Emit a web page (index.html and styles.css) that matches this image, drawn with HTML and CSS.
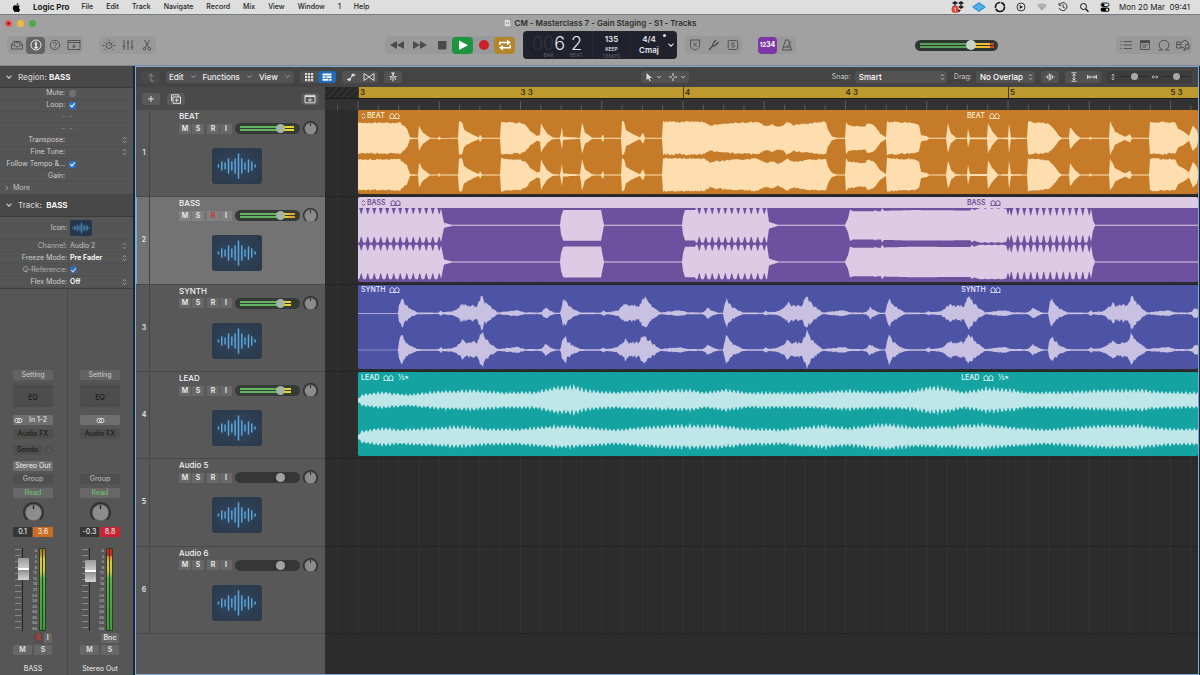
FILE: index.html
```html
<!DOCTYPE html>
<html lang="en">
<head>
<meta charset="utf-8">
<title>CM - Masterclass 7 - Gain Staging - S1 - Tracks</title>
<link rel="stylesheet" href="styles.css">
</head>
<body>
<svg class="defs" aria-hidden="true">
  <symbol id="chev" viewBox="0 0 8 8"><path d="M1.500 2.700 4 5.200l2.500-2.500" fill="none" stroke="currentColor" stroke-width="1.100"/></symbol>
  <symbol id="updown" viewBox="0 0 8 8"><path d="M2 3l2-2 2 2M2 5l2 2 2-2" fill="none" stroke="currentColor" stroke-width="1"/></symbol>
  <symbol id="loop" viewBox="0 0 22 12"><path d="M1 11h4C0 8.500 1 1.500 6 1.500s6 7 1 9.500h8C10 8.500 11 1.500 16 1.500s6 7 1 9.500h4" fill="none" stroke="currentColor" stroke-width="1.800"/></symbol>
  <symbol id="rings" viewBox="0 0 12 8"><g fill="none" stroke="currentColor" stroke-width="1.100"><circle cx="4.300" cy="4" r="3"/><circle cx="7.700" cy="4" r="3"/></g></symbol>
  <symbol id="wave" viewBox="0 0 50 36"><path d="M6.500 17v2M9.800 14v8M13.100 15v6M16.500 11v14M19.800 14v8M23.100 11v14M26.500 6v24M29.800 11v14M33.100 15v6M36.500 12v12M39.800 14v8M43.100 17v2" fill="none" stroke="#5ba6dc" stroke-width="1.500" stroke-linecap="round"/></symbol>
  <symbol id="knob" viewBox="0 0 20 20"><path d="M4 17a9.200 9.200 0 1 1 12 0" fill="none" stroke="#303030" stroke-width="1.600"/><circle cx="10" cy="10.300" r="7.400" fill="#8c8c8c"/><path d="M10 3.200v3.600" stroke="#222" stroke-width="1.300"/></symbol>
</svg>

<nav class="menubar" aria-label="Menu bar">
  <svg class="apple" viewBox="0 0 24 24"><path d="M12.152 6.896c-.948 0-2.415-1.078-3.960-1.040-2.040.027-3.910 1.183-4.961 3.014-2.117 3.675-.546 9.103 1.519 12.090 1.013 1.454 2.208 3.090 3.792 3.039 1.520-.065 2.090-.987 3.935-.987 1.831 0 2.350.987 3.960.948 1.637-.026 2.676-1.480 3.676-2.948 1.156-1.688 1.636-3.325 1.662-3.415-.039-.013-3.182-1.221-3.220-4.857-.026-3.040 2.480-4.494 2.597-4.559-1.429-2.090-3.623-2.324-4.390-2.376-2-.156-3.675 1.090-4.610 1.090zM15.530 3.830c.843-1.012 1.400-2.427 1.245-3.830-1.207.052-2.662.805-3.532 1.818-.780.896-1.454 2.338-1.273 3.714 1.338.104 2.715-.688 3.559-1.701"/></svg>
  <a href="#" class="app">Logic Pro</a><a href="#">File</a><a href="#">Edit</a><a href="#">Track</a><a href="#">Navigate</a><a href="#">Record</a><a href="#">Mix</a><a href="#">View</a><a href="#">Window</a><a href="#">1</a><a href="#">Help</a>
  <div class="status">
    <svg viewBox="0 0 14 12"><path d="M4 0l3 2-3 2-3-2zM10 0l3 2-3 2-3-2zM4 4l3 2-3 2-3-2zM10 4l3 2-3 2-3-2zM7 8l3 1.800L7 11.500 4 9.800z" fill="#222"/><circle cx="4" cy="8.500" r="3.500" fill="#e8432f"/><path d="M3.300 7.500l1-.800v3.800" stroke="#fff" fill="none" stroke-width=".8"/></svg>
    <svg viewBox="0 0 14 12"><path d="M7 1l7 5-7 5-7-5z" fill="#2c94d6"/><path d="M2.500 6h9M5 4h4M5 8h4" stroke="#9bd4f5" stroke-width=".8"/></svg>
    <svg viewBox="0 0 14 12"><circle cx="7" cy="6" r="4.500" fill="none" stroke="#111" stroke-width="1.700" stroke-dasharray="12 1 8 1 5 1.300"/></svg>
    <svg viewBox="0 0 14 12"><circle cx="7" cy="6" r="4" fill="none" stroke="#222" stroke-width=".9"/><path d="M5.700 4l3.300 2-3.300 2z" fill="#222"/></svg>
    <svg viewBox="0 0 14 12"><path d="M2 4.300a7.500 7.500 0 0 1 10 0L7 10z" fill="#aaa"/><path d="M3.500 6a5 5 0 0 1 7 0" stroke="#d0d0d0" fill="none" stroke-width=".6"/></svg>
    <svg viewBox="0 0 14 12"><path d="M3.200 7a4 4 0 1 0 .300-3.300M3 2v2.200h2.200M7 3.500V6l2 1.200" fill="none" stroke="#222" stroke-width=".9"/></svg>
    <svg viewBox="0 0 14 12"><path d="M8.800 8l2.700 2.700" stroke="#111" stroke-width="1.300"/><circle cx="6.500" cy="5.500" r="3" fill="none" stroke="#111"/></svg>
    <svg viewBox="0 0 14 12"><rect x="3" y="2" width="8" height="3.500" rx="1.700" fill="none" stroke="#111" stroke-width=".9"/><circle cx="5" cy="3.700" r="1.500"/><rect x="2.600" y="6.600" width="8.800" height="4.200" rx="2"/><circle cx="9" cy="8.700" r="1.200" fill="#ddd"/></svg>
    <time>Mon 20 Mar&nbsp; 09:41</time>
  </div>
</nav>

<header class="window-bar">
  <div class="titlebar">
    <div class="lights"><button class="red" aria-label="Close"></button><button class="yellow" aria-label="Minimise"></button><button class="green" aria-label="Zoom"></button></div>
    <h1><svg viewBox="0 0 8 9"><path d="M.5.5h5l2 2v6h-7z" fill="#e4e4e4" stroke="#888" stroke-width=".5"/><path d="M2.500 3.500h3v2h-3z" fill="none" stroke="#777" stroke-width=".6"/></svg>CM - Masterclass 7 - Gain Staging - S1 - Tracks</h1>
  </div>
  <div class="toolbar">
    <div class="side-left">
      <div class="pill">
        <button aria-label="Library"><svg viewBox="0 0 14 12"><path d="M1.500 6l2-3.500h7l2 3.500v4h-11zM1.500 6h3c0 2.500 5 2.500 5 0h3M4 5.500C4 3 10 3 10 5.500"/></svg></button>
        <button class="on" aria-label="Inspector"><svg viewBox="0 0 14 12"><circle cx="7" cy="6" r="5"/><path d="M5.700 5h1.500v3.700M5.500 8.800h3.300M7 2.600v1.300" stroke-width="1.400"/></svg></button>
        <button aria-label="Quick Help"><svg viewBox="0 0 14 12"><circle cx="7" cy="6" r="4.700"/><path d="M5.500 5c0-2 3-2 3 0 0 1-1.500 1-1.500 2.200M7 8v1"/></svg></button>
        <button aria-label="Toolbar"><svg viewBox="0 0 14 12"><path d="M1 1.500h12v9H1zM1 3.500h12M7 5v3.500M5 6.800l2 2 2-2"/></svg></button>
      </div>
      <div class="pill">
        <button aria-label="Smart Controls"><svg viewBox="0 0 14 12"><circle cx="7" cy="6.500" r="3"/><path d="M7 6.500L9 4M7 .5v1.500M2 2.500l1.200 1.200M12 2.500l-1.200 1.200M.5 6.500h2M11.500 6.500h2M2.500 11l1-1M11.500 11l-1-1"/></svg></button>
        <button aria-label="Mixer"><svg viewBox="0 0 14 12"><path d="M3 1v10M7 1v10M11 1v10M1.800 7.500h2.400M5.800 4h2.400M9.800 8h2.400"/></svg></button>
        <button aria-label="Editors"><svg viewBox="0 0 14 12"><path d="M4.500 1L9 9M9.500 1L5 9"/><circle cx="4.500" cy="9.800" r="1.300"/><circle cx="9.500" cy="9.800" r="1.300"/></svg></button>
      </div>
    </div>
    <div class="center">
      <div class="pill transport">
        <button aria-label="Rewind"><svg viewBox="0 0 16 12"><path class="f" d="M8 2v8L1 6zM15 2v8L8 6z"/></svg></button>
        <button aria-label="Forward"><svg viewBox="0 0 16 12"><path class="f" d="M1 2v8l7-4zM8 2v8l7-4z"/></svg></button>
        <button class="stop" aria-label="Stop"><svg viewBox="0 0 12 12"><path class="f" d="M2 2h8.500v8.500H2z"/></svg></button>
        <button class="play" aria-label="Play"><svg viewBox="0 0 12 12"><path class="f" d="M2 1.500v9.500l9-4.700z"/></svg></button>
        <button class="rec" aria-label="Record"><svg viewBox="0 0 12 12"><circle cx="6" cy="6" r="5" fill="#cb2229" stroke="none"/></svg></button>
        <button class="cycle" aria-label="Cycle"><svg viewBox="0 0 14 12"><path d="M1.800 6V3.500h8.500M12.200 6v2.700H3.700" stroke-width="1.500"/><path class="f" d="M9 .8l4 2.700-4 2.700zM5 6l-4 2.700 4 2.700z"/></svg></button>
      </div>
      <div class="lcd">
        <div class="pos"><div class="cell"><b><i>00</i>6</b><small>BAR</small></div><div class="cell"><b>2</b><small>BEAT</small></div></div>
        <div class="tempo"><strong>135</strong><small class="lit">KEEP</small><small>TEMPO</small></div>
        <div class="sig"><strong>4/4</strong><strong>Cmaj</strong></div>
        <div class="more"><span class="dot"></span><svg viewBox="0 0 8 8"><use href="#chev"/></svg></div>
      </div>
      <div class="pill">
        <button aria-label="Replace"><svg viewBox="0 0 14 12"><path d="M2.500 1h9v6.500c0 1-3 3.500-4.500 3.500S2.500 8.500 2.500 7.500zM5 3.500l4 4M9 3.500l-4 4"/></svg></button>
        <button aria-label="Tuner"><svg viewBox="0 0 14 12"><path d="M2 11l4-4.500M6 6.500C5 5 6.500 4 9 1M6 6.500c1.500 1.300 3-.5 5.500-3.300" stroke-width="1.300"/></svg></button>
        <button aria-label="Solo"><svg viewBox="0 0 14 12"><rect x="2.200" y="1.500" width="9.500" height="9" rx="1"/><path d="M8.600 4.300C8 3.300 5.300 3.500 5.500 5c.2 1 3 .5 3.100 1.800.1 1.500-2.800 1.500-3.300.4"/></svg></button>
      </div>
      <div class="pill">
        <button class="count" aria-label="Count In"><small>12</small>34</button>
        <button aria-label="Metronome"><svg viewBox="0 0 14 12"><path d="M5.500 1h3L11.500 11h-9zM3.300 8h7.300M7 8l4-5.500" /></svg></button>
      </div>
    </div>
    <div class="side-right">
      <input type="range" class="level master" aria-label="Master volume" value="70">
      <div class="pill">
        <button aria-label="List Editors"><svg viewBox="0 0 14 12"><path d="M4.500 2.500H13M4.500 6H13M4.500 9.500H13M1.300 2.500h1.300M1.300 6h1.300M1.300 9.500h1.300"/></svg></button>
        <button aria-label="Note Pads"><svg viewBox="0 0 14 12"><path d="M2.500 1.500h9v9h-9z"/><path d="M2.500 3h9" stroke-width="2"/><path d="M4.500 6h5M4.500 8h3.500"/></svg></button>
        <button aria-label="Apple Loops"><svg viewBox="0 0 14 12"><path d="M1.500 11h4C0 8 2 1.300 7 1.300S14 8 8.500 11h4"/></svg></button>
        <button aria-label="Browsers"><svg viewBox="0 0 14 12"><path d="M5 9H.7V3h3l1 1M.7 5.500H5M5 3.500l4-2.300 3 2v3M5 3.500V9l3-1M9.500 10.500V5.800l3.500-.8v4.500"/><circle cx="8.700" cy="10.500" r=".9"/><circle cx="12.200" cy="9.500" r=".9"/></svg></button>
      </div>
    </div>
  </div>
</header>

<main class="workspace">
  <aside class="inspector">
    <h2><svg viewBox="0 0 8 8"><use href="#chev"/></svg>Region: <b>BASS</b></h2>
    <div class="params region-params">
      <div><label for="mute">Mute:</label><input type="checkbox" id="mute"></div>
      <div><label for="rloop">Loop:</label><input type="checkbox" id="rloop" checked></div>
      <div class="dash"><span>-</span><span>-</span></div>
      <div class="dash"><span>-</span><span>-</span></div>
      <div><span class="lab">Transpose:</span><span class="val"></span><svg viewBox="0 0 8 8"><use href="#updown"/></svg></div>
      <div><span class="lab">Fine Tune:</span><span class="val"></span><svg viewBox="0 0 8 8"><use href="#updown"/></svg></div>
      <div><label for="follow">Follow Tempo &amp;...</label><input type="checkbox" id="follow" checked></div>
      <div><span class="lab">Gain:</span></div>
      <button class="more-row"><svg viewBox="0 0 8 8"><path d="M3 1.500L5.500 4 3 6.500" fill="none" stroke="currentColor"/></svg>More</button>
    </div>
    <h2 class="track-head"><svg viewBox="0 0 8 8"><use href="#chev"/></svg>Track:&nbsp; <b>BASS</b></h2>
    <div class="params track-params">
      <div class="icon-row"><span class="lab">Icon:</span><svg class="mini" viewBox="0 0 50 36"><use href="#wave"/></svg></div>
      <div class="dim"><span class="lab">Channel:</span><span class="val">Audio 2</span><svg viewBox="0 0 8 8"><use href="#updown"/></svg></div>
      <div><span class="lab">Freeze Mode:</span><span class="val strong">Pre Fader</span><svg viewBox="0 0 8 8"><use href="#updown"/></svg></div>
      <div class="dim"><label for="qref">Q-Reference:</label><input type="checkbox" id="qref" checked></div>
      <div><span class="lab">Flex Mode:</span><span class="val strong">Off</span><svg viewBox="0 0 8 8"><use href="#updown"/></svg></div>
    </div>
    <div class="strips">
      <section class="strip" aria-label="BASS channel">
        <button class="r1 slot">Setting</button>
        <button class="r2 eq">EQ</button>
        <button class="r3 lit-slot input"><svg viewBox="0 0 12 8"><use href="#rings"/></svg>In 1-2</button>
        <button class="r4 slot dark">Audio FX</button>
        <div class="r5 sends"><button class="slot dark">Sends</button><i></i></div>
        <button class="r6 lit-slot">Stereo Out</button>
        <button class="r7 slot dark">Group</button>
        <button class="r8 read">Read</button>
        <svg class="r9 pan" viewBox="0 0 20 20"><use href="#knob"/></svg>
        <div class="r10 values"><span>0.1</span><span class="peak orange">3.6</span></div>
        <div class="r11 fader"></div>
        <div class="r12 pair"><span></span><span class="ri"><button class="armed">R</button><button>I</button></span></div>
        <div class="r13 pair"><button>M</button><button>S</button></div>
        <div class="r14 name">BASS</div>
      </section>
      <section class="strip out" aria-label="Stereo Out channel">
        <button class="r1 slot">Setting</button>
        <button class="r2 eq">EQ</button>
        <button class="r3 lit-slot input" aria-label="Stereo format"><svg viewBox="0 0 12 8"><use href="#rings"/></svg></button>
        <button class="r4 slot dark">Audio FX</button>
        <button class="r7 slot dark">Group</button>
        <button class="r8 read">Read</button>
        <svg class="r9 pan" viewBox="0 0 20 20"><use href="#knob"/></svg>
        <div class="r10 values"><span>-0.3</span><span class="peak crimson">8.8</span></div>
        <div class="r11 fader"></div>
        <div class="r12 pair"><span></span><button>Bnc</button></div>
        <div class="r13 pair"><button>M</button><button>S</button></div>
        <div class="r14 name">Stereo Out</div>
      </section>
    </div>
  </aside>

  <section class="editor" aria-label="Tracks area">
    <div class="edit-bar">
      <div class="grp off"><button aria-label="Up"><svg viewBox="0 0 10 10"><path d="M5 9V2M2.500 4.500L5 2l2.500 2.500M5 9h3"/></svg></button></div>
      <div class="grp menus"><button>Edit<svg viewBox="0 0 8 8"><use href="#chev"/></svg></button><button>Functions<svg viewBox="0 0 8 8"><use href="#chev"/></svg></button><button>View<svg viewBox="0 0 8 8"><use href="#chev"/></svg></button></div>
      <div class="grp"><button aria-label="Grid view"><svg viewBox="0 0 10 10"><path class="f" d="M1 1h2.200v2.200H1zM4 1h2.200v2.200H4zM7 1h2.200v2.200H7zM1 4h2.200v2.200H1zM4 4h2.200v2.200H4zM7 4h2.200v2.200H7zM1 7h2.200v2.200H1zM4 7h2.200v2.200H4zM7 7h2.200v2.200H7z"/></svg></button><button class="blue" aria-label="Tracks view"><svg viewBox="0 0 10 10"><path class="f" d="M.5 1.500h9v2h-9zM.5 4.300h3v1.700h-3zM4.500 4.300h5v1.700h-5zM.5 6.800h6v2h-6zM7.300 6.800h2.200v2H7.300z"/></svg></button></div>
      <div class="grp"><button aria-label="Automation"><svg viewBox="0 0 10 10"><path d="M1 7.500h3l2.500-4.500h3"/><circle class="f" cx="3.300" cy="7.500" r="1.500"/><circle class="f" cx="7" cy="3" r="1.500"/></svg></button><button aria-label="Flex"><svg class="wide-icon" viewBox="0 0 12 10"><path d="M1 1.500v7L6 5zM11 1.500v7L6 5z"/></svg></button></div>
      <div class="grp"><button aria-label="Catch playhead"><svg viewBox="0 0 10 10"><path d="M5 3v6.500M1.500 4.500h2L2.500 8M8.500 4.500h-2L7.500 8"/><path class="f" d="M3 .5h4L5 4z"/></svg></button></div>
      <div class="grp tools"><button aria-label="Pointer tool"><svg viewBox="0 0 8 10"><path class="f" d="M1.500 1v7l1.800-1.500 1.200 2.800 1.200-.6-1.200-2.600H7z"/></svg><svg class="c" viewBox="0 0 8 8"><use href="#chev"/></svg></button><button aria-label="Command-click tool"><svg viewBox="0 0 10 10"><path d="M5 1v3M5 6v3M1 5h3M6 5h3"/></svg><svg class="c" viewBox="0 0 8 8"><use href="#chev"/></svg></button></div>
      <div class="snap"><label for="snap">Snap:</label><span class="sel wide"><select id="snap"><option>Smart</option></select><svg viewBox="0 0 8 8"><use href="#updown"/></svg></span>
      <label for="drag">Drag:</label><span class="sel"><select id="drag"><option>No Overlap</option></select><svg viewBox="0 0 8 8"><use href="#updown"/></svg></span></div>
      <div class="grp"><button aria-label="Waveform zoom"><svg viewBox="0 0 10 10"><path d="M1 4.500v1M2.600 3.500v3M4.200 1.500v7M5.800 2v6M7.400 3.500v3M9 4.500v1"/></svg></button></div>
      <div class="grp"><button aria-label="Auto zoom vertical"><svg viewBox="0 0 10 10"><path d="M2.500.8h5M2.500 9.200h5M5 2v6M3.500 3.500L5 2l1.500 1.500M3.500 6.500L5 8l1.500-1.500"/></svg></button><button aria-label="Auto zoom horizontal"><svg viewBox="0 0 10 10"><path d="M.6 3v4M9.400 3v4M1.500 5h7M3 3.500L1.500 5 3 6.500M7 3.500L8.500 5 7 6.500"/></svg></button></div>
      <div class="zooms"><svg viewBox="0 0 8 8"><path d="M4 1v6M2.500 2.500L4 1l1.500 1.500M2.500 5.500L4 7l1.500-1.500"/></svg><input type="range" aria-label="Vertical zoom" value="52"><svg viewBox="0 0 8 8"><path d="M1 4h6M2.500 2.500L1 4l1.500 1.500M5.500 2.500L7 4 5.500 5.500"/></svg><input type="range" aria-label="Horizontal zoom" value="52"></div>
    </div>
    <div class="ruler-row">
      <div class="add-bar">
        <button aria-label="Add track"><svg viewBox="0 0 12 10"><path d="M6 2v6M3 5h6"/></svg></button>
        <button aria-label="Duplicate track"><svg viewBox="0 0 12 10"><path d="M3 3h7.500v6.300H3zM1.500 7V.8h7.300V3M6.700 4.500v3.300M5 6.200h3.500"/></svg></button>
        <button class="cfg" aria-label="Track header setup"><svg viewBox="0 0 12 10"><path d="M1 1.300h10v7.500H1zM1 2.500h10M6 3.800v3.400M4.200 5.700L6 7.300l1.800-1.600"/></svg></button>
      </div>
      <div class="ruler">
        <div class="cycle-lane"><div class="hatch"></div><div class="cycle-range" id="marks"></div></div>
        <svg class="ticks" id="ticks" viewBox="0 0 873 11" preserveAspectRatio="none"></svg>
      </div>
    </div>
    <div class="tracks-body">
      <div class="heads" id="heads"></div>
      <div class="arrange">
        <svg class="grid-lines" id="grid" viewBox="0 0 873 524" preserveAspectRatio="none"></svg>
        <div class="lanes" id="lanes"></div>
      </div>
    </div>
  </section>
</main>
<script src="main.js"></script>
</body>
</html>
```

FILE: styles.css
```css
* { box-sizing: border-box; }
body {
  margin: 0;
  min-height: 100vh;
  display: flex;
  flex-direction: column;
  background: #16273a;
  color: #e2e2e2;
  font: 7px/10px Inter, "Liberation Sans", sans-serif;
}
button, select, input { font: inherit; color: inherit; margin: 0; padding: 0; border: 0; background: none; }
button { display: flex; align-items: center; justify-content: center; }
h1, h2 { margin: 0; font-weight: 500; }
a { color: inherit; text-decoration: none; }
svg { display: block; }
.defs { display: none; }

.menubar {
  display: flex;
  align-items: center;
  gap: 13px;
  height: 15px;
  padding: 0 10px 0 12px;
  background: #dedede;
  border-bottom: 1px solid #777c82;
  color: #1c1c1c;
  font-size: 8px;
}
.menubar a { font-size: 7px; font-weight: 500; }
.menubar .app { font-size: 8px; font-weight: 700; margin: 0 -1px; }
.apple { width: 9px; height: 9px; }
.status { display: flex; align-items: center; gap: 7px; margin-left: auto; }
.status svg { width: 14px; height: 12px; }
.status time { white-space: nowrap; }

.window-bar { background: #a1a1a1; color: #2f2f2f; border-bottom: 1px solid #7e8893; }
.titlebar { display: grid; grid-template-columns: 1fr auto 1fr; align-items: center; height: 16px; padding: 0 5px; }
.lights { display: flex; gap: 5px; }
.lights button { width: 7px; height: 7px; border-radius: 50%; }
.lights .red { background: radial-gradient(#8d1b1b 1px, #ec5b55 2px); }
.lights .yellow { background: #f2b93c; }
.lights .green { background: #50a94b; }
.titlebar h1 { display: flex; align-items: center; gap: 4px; font-size: 8px; font-weight: 600; }
.titlebar h1 svg { width: 7px; height: 8px; }
.toolbar { display: flex; align-items: center; height: 34px; padding: 0 8px 6px 7px; }
.side-left { flex: 21 1 0; display: flex; gap: 16px; }
.center { display: flex; align-items: center; gap: 8px; }
.side-right { flex: 22 1 0; display: flex; align-items: center; justify-content: space-between; }
.pill { display: flex; align-items: center; height: 18px; border-radius: 5px; background: #999; color: #4b4b4b; }
.pill button { width: 19px; height: 17px; border-radius: 4px; }
.pill svg { width: 14px; height: 12px; fill: none; stroke: currentColor; stroke-width: .9; }
.pill svg .f { fill: currentColor; stroke: none; }
.pill .on { background: #636363; color: #f5f5f5; }
.center .pill + .pill { margin-left: 8px; }
.transport button { width: 23px; }
.transport svg { width: 16px; }
.transport .stop, .transport .rec { width: 21px; }
.transport .stop svg, .transport .play svg, .transport .rec svg { width: 12px; }
.transport .play { width: 21px; background: #1d9440; color: #fff; }
.transport .cycle { width: 21px; background: #b3852c; color: #fff; }
.transport .cycle svg { width: 14px; }
.pill .count { background: #7f35a5; color: #fff; font-size: 7px; font-weight: 700; }
.count small { font-size: 6px; }

.lcd { display: flex; width: 154px; height: 28px; border-radius: 4px; background: #1f222d; color: #e5e7ec; }
.lcd small { font-size: 5px; line-height: 7px; color: #555966; font-weight: 500; }
.lcd strong { font-size: 8px; line-height: 11px; font-weight: 600; }
.lcd .lit { color: #e5e7ec; line-height: 8px; }
.pos { display: flex; width: 70px; gap: 5px; padding-left: 9px; border-right: 1px solid #292c38; }
.cell { display: flex; flex-direction: column; align-items: center; }
.cell b { font-size: 18px; line-height: 21px; font-weight: 300; padding-top: 2px; height: 21px; }
.cell i { font-style: normal; color: #333641; }
.tempo, .sig { display: flex; flex-direction: column; align-items: center; padding-top: 3px; }
.tempo { width: 38px; border-right: 1px solid #292c38; }
.sig { width: 36px; }
.more { display: flex; flex-direction: column; align-items: flex-start; }
.more .dot { width: 3px; height: 3px; margin: 3px 0 4px -4px; border-radius: 50%; background: #e5e7ec; }
.more svg { width: 8px; height: 8px; }

.level {
  appearance: none;
  display: block;
  width: 65px;
  height: 11px;
  border-radius: 6px;
  background: #363636;
}
.level.live {
  background:
    linear-gradient(90deg, #62b562 44px, #e9d32c 44px) 5px 3px / 54px 2px no-repeat,
    linear-gradient(90deg, #62b562 44px, #e9d32c 44px) 5px 6px / 54px 2px no-repeat,
    #343a34;
}
.level.live.short { background-size: 51px 2px, 51px 2px, auto; }
.level.live.hot {
  background:
    linear-gradient(90deg, #62b562 44px, #e9d32c 44px, #e0962c 55px) 5px 3px / 55px 2px no-repeat,
    linear-gradient(90deg, #62b562 44px, #e9d32c 44px, #e0962c 55px) 5px 6px / 55px 2px no-repeat,
    #343a34;
}
.level::-webkit-slider-thumb { appearance: none; width: 9px; height: 9px; border-radius: 50%; background: #a2a2a2; }
.level.live::-webkit-slider-thumb { background: #a3b5a3; }
.level.master {
  width: 83px;
  margin-left: 30%;
  background:
    linear-gradient(90deg, #57a15a 52px, #f0bd2f 52px 70px, #cf4a2b 70px) 5px 3px / 74px 2px no-repeat,
    linear-gradient(90deg, #57a15a 52px, #f0bd2f 52px 70px, #cf4a2b 70px) 5px 6px / 74px 2px no-repeat,
    #303630;
}
.level.master::-webkit-slider-thumb { width: 10px; height: 10px; background: #c9d2c6; }

.workspace { flex: 1; display: flex; gap: 2px; }
.inspector { width: 133px; flex: none; display: flex; flex-direction: column; background: #555; }
.inspector h2 { display: flex; align-items: center; height: 22px; padding-left: 5px; background: #484848; border-bottom: 1px solid #3a3a3a; color: #ccc; font-size: 8px; white-space: pre; }
.inspector h2 svg { width: 8px; height: 8px; margin-right: 5px; }
.inspector h2 b { color: #fff; font-weight: 600; }
.inspector .track-head { height: 23px; }
.params > div { display: flex; align-items: center; padding-right: 5px; gap: 4px; border-bottom: 1px solid #505050; }
.params label, .lab { width: 65px; text-align: right; color: #cfcfcf; white-space: nowrap; }
.params svg { width: 7px; height: 8px; color: #aaa; margin-left: auto; }
.region-params { display: grid; grid-auto-rows: 1fr; height: 106px; }
.track-params label, .track-params .lab { width: 67px; }
.track-params > div { height: 12px; gap: 3px; }
.track-params .icon-row { height: 23px; }
.params .mini { width: 22px; height: 16px; margin: 0; border-radius: 2px; background: #24384d; }
.dash { padding-left: 62px; color: #999; }
.dim { opacity: .75; }
.strong { color: #fff; font-weight: 600; }
.params .more-row { justify-content: flex-start; padding-left: 3px; gap: 3px; color: #c4c4c4; }
.params .more-row svg { margin: 0; }
input[type=checkbox] { appearance: none; width: 7px; height: 7px; border-radius: 2px; background: #707070; display: grid; place-items: center; }
input[type=checkbox]:checked { background: #2a72cf; }
input[type=checkbox]:checked::before { content: ""; width: 2px; height: 4px; border: solid #fff; border-width: 0 1px 1px 0; transform: rotate(40deg); margin-bottom: 1px; }

.strips { flex: 1; display: grid; grid-template-columns: 68px 1fr; border-top: 1px solid #3e3e3e; background: #565656; }
.strip {
  display: grid;
  grid-template-columns: 40px;
  grid-template-rows: 13px 32px 14px 16px 16px 13px 14px 14px 25px 21px 85px 12px 18px 12px;
  align-content: end;
  align-items: start;
  padding: 0 14px 0 13px;
  border-right: 1px solid #484848;
}
.strip.out { padding-left: 12px; border: 0; }
.strip button { height: 10px; border-radius: 1px; background: #676767; white-space: nowrap; }
.strip .slot { background: #636363; color: #d0d0d0; }
.strip .slot.dark { background: #4f4f4f; color: #1d1d1d; font-weight: 500; }
.strip .r7.slot.dark { color: #b0b0b0; }
.strip .eq { height: 24px; background: linear-gradient(#515151 3px, #474747 3px 4px, #4d4d4d 4px); color: #1d1d1d; padding-top: 5px; font-weight: 500; }
.strip .lit-slot { background: #6f6f6f; color: #f0f0f0; }
.strip .input { gap: 6px; justify-content: flex-start; padding-left: 1px; }
.strip.out .input { justify-content: center; padding: 0; }
.input svg { width: 9px; height: 7px; }
.sends { display: flex; justify-content: space-between; align-items: center; }
.sends button { width: 29px; }
.sends i { width: 8px; height: 8px; border-radius: 50%; border: 1px solid #4a4a4a; }
.strip .read { color: #74c478; }
.r1 { grid-row: 1; } .r2 { grid-row: 2; } .r3 { grid-row: 3; } .r4 { grid-row: 4; } .r5 { grid-row: 5; }
.r6 { grid-row: 6; } .r7 { grid-row: 7; } .r8 { grid-row: 8; } .r9 { grid-row: 9; } .r10 { grid-row: 10; }
.r11 { grid-row: 11; } .r12 { grid-row: 12; } .r13 { grid-row: 13; } .r14 { grid-row: 14; }
.pan { width: 21px; height: 21px; justify-self: center; }
.values { display: grid; grid-template-columns: 19px 20px; gap: 1px; text-align: center; font-weight: 500; }
.values span { background: #363636; }
.values .orange { background: #cc6e22; }
.values .crimson { background: #c92334; }
.fader { display: grid; grid-template-columns: 17px 8px 1px 7px; align-items: stretch; height: 83px; }
.fader input {
  appearance: none;
  writing-mode: vertical-lr;
  direction: rtl;
  width: 17px;
  height: 83px;
  background:
    linear-gradient(#252525, #252525) 9px 0 / 1px 100% no-repeat,
    repeating-linear-gradient(#8a8a8a 0 1px, transparent 1px 6px) 2px 1px / 6px 100% no-repeat;
}
.fader input::-webkit-slider-thumb {
  appearance: none;
  width: 11px;
  height: 22px;
  margin-left: 4px;
  border-radius: 1px;
  background: linear-gradient(#9b9b9b, #c9c9c9 45%, #fff 47% 53%, #8f8f8f 55%, #d6d6d6);
}
.scale { display: flex; flex-direction: column; justify-content: space-between; align-items: flex-end; padding-right: 1px; font-size: 4px; line-height: 5px; color: #c4c4c4; }
.meter { grid-column: 4; display: grid; grid-template-columns: 1fr 1fr; gap: 1px; padding: 1px; background: #27401f; }
.meter i { background: linear-gradient(#b57220, #c98f28 8%, #e0c72c 12%, #d3c637 28%, #57b04c 36%, #3f9c45); }
.out .meter i { background: linear-gradient(#d6262b 8%, #e08a28 9%, #e0c72c 16%, #d3c637 28%, #57b04c 36%, #3f9c45); }
.pair { display: grid; grid-template-columns: 19px 18px; gap: 2px; font-weight: 600; }
.pair > span { display: flex; gap: 1px; }
.ri button { flex: 1; }
.strip .armed { color: #c23a3a; background: #5d4a4a; }
.r14 { line-height: 12px; text-align: center; white-space: nowrap; color: #eee; }

.editor { flex: 1; min-width: 0; display: flex; flex-direction: column; border: 1px solid #7fa9d3; background: #2c2c2c; margin-right: 1px; }
.edit-bar { display: flex; align-items: center; height: 20px; padding: 0 6px 1px; gap: 6px; background: #444; color: #ddd; font-weight: 500; }
.grp { display: flex; height: 12px; border-radius: 3px; background: #525252; }
.grp button { width: 18px; border-radius: 3px; }
.grp svg, .add-bar svg, .zooms svg { width: 10px; height: 10px; fill: none; stroke: currentColor; stroke-width: 1; }
.grp .wide-icon { width: 12px; }
.grp .f { fill: currentColor; stroke: none; }
.off { color: #888; background: #4b4b4b; }
.menus { font-size: 8px; color: #eee; }
.menus button { width: auto; gap: 6px; padding: 0 3px; }
.menus svg { width: 7px; height: 7px; color: #aaa; stroke: none; }
.grp .blue { background: #2169b9; color: #fff; }
.tools { margin: 0 13% 0 auto; }
.tools button { width: 24px; gap: 2px; }
.tools .c { width: 6px; height: 6px; }
.snap { display: flex; align-items: center; gap: 4px; }
.snap label { color: #b4b4b4; }
.sel { display: flex; align-items: center; height: 12px; margin-right: 3px; border-radius: 3px; background: #525252; color: #fff; }
.sel select { appearance: none; width: 51px; height: 12px; padding-left: 4px; font-size: 8px; line-height: 12px; font-weight: 500; }
.sel.wide select { width: 84px; }
.sel:last-child { margin-right: 0; }
.sel svg { width: 7px; height: 8px; color: #bbb; margin-right: 1px; }
.zooms { display: flex; align-items: center; gap: 3px; height: 12px; padding: 0 2px; background: #3d3d3d; color: #aaa; }
.zooms svg { width: 8px; height: 8px; }
.zooms input { appearance: none; width: 28px; height: 7px; background: linear-gradient(#2b2b2b, #2b2b2b) 0 3px / 100% 1px no-repeat; }
.zooms input::-webkit-slider-thumb { appearance: none; width: 7px; height: 7px; border-radius: 50%; background: #a8a8a8; }

.ruler-row, .tracks-body { display: grid; grid-template-columns: 189px 1fr; }
.add-bar { display: flex; align-items: center; height: 23px; padding: 0 6px; gap: 7px; background: #4a4a4a; }
.add-bar button { width: 18px; height: 12px; border-radius: 3px; background: #5a5a5a; }
.add-bar svg { width: 12px; }
.add-bar .cfg { margin-left: auto; }
.ruler { background: #2b2b2b; }
.cycle-lane { display: flex; height: 12px; border-bottom: 1px solid #1d1d1d; }
.hatch { width: 33px; background: repeating-linear-gradient(135deg, #262626 0 3px, #303030 3px 5px); }
.cycle-range { flex: 1; position: relative; background: #be9a2e; color: #221c06; font-size: 8px; font-weight: 500; }
.cycle-range span { position: absolute; top: 0; line-height: 11px; }
.cycle-range .bar { border-left: 1px solid #4a3a0c; padding-left: 1px; }
.ticks { width: 100%; height: 11px; background: #323232; }
.tracks-body { flex: 1; }
.heads { display: grid; grid-template-rows: repeat(6, 1fr) 40px; background: #585858; }
.head { display: grid; grid-template-columns: 14px 1fr; border-bottom: 1px solid #494949; }
.head.sel-track { background: #737373; box-shadow: inset 1px 0 #79abd9; }
.num { display: grid; place-items: center; padding-left: 3px; border-right: 1px solid #464646; color: #f0f0f0; font-weight: 500; }
.info { padding: 1px 0 0 29px; }
.tname { font-size: 8px; line-height: 11px; color: #f2f2f2; font-weight: 500; }
.ctl { display: flex; align-items: center; height: 13px; gap: 3px; }
.btns { display: flex; gap: 1px; }
.btns button { width: 12px; height: 10px; background: #686868; color: #eee; font-weight: 600; }
.sel-track .btns button { background: #828282; }
.sel-track .btns .armed { color: #d02b2b; }
.ctl svg { width: 15px; height: 15px; }
.ticon { width: 50px; height: 36px; margin: 13px 0 0 33px; border-radius: 3px; background: radial-gradient(#304763, #2b3846); }

.arrange { display: grid; grid-template: 1fr 40px / 100%; background: #2c2c2c; }
.grid-lines, .lanes { grid-area: 1 / 1; width: 100%; height: 100%; }
.grid-lines { height: 0; min-height: 100%; }
.lanes { display: grid; grid-template-rows: repeat(6, 1fr); min-height: 522px; }
.lane { padding: 0 0 2px 33px; border-bottom: 1px solid #242424; }
.region { height: 100%; display: flex; flex-direction: column; border-radius: 2px; overflow: hidden; background: var(--bg); color: var(--fg); }
.labels { display: flex; flex: none; height: 11px; padding-left: 3px; color: var(--label); font-weight: 500; background: var(--bar); }
.labels span { display: flex; align-items: center; gap: 4px; white-space: nowrap; }
.labels svg { width: 11px; height: 6px; }
.labels .ud { width: 5px; height: 8px; margin-right: -3px; }
.region .wave { flex: 1 1 10px; min-height: 0; width: 100%; height: 0; }
.beat { --bg: #c67b29; --fg: #fedeae; --label: #fff0d6; --bar: #c67b29; }
.bass { --bg: #6e519e; --fg: #ddcae4; --label: #5b3f86; --bar: #ddcae4; }
.synth { --bg: #4d53a5; --fg: #c8c1e2; --label: #f0f0ff; --bar: #4d53a5; }
.lead { --bg: #15a3a2; --fg: #bfe6e9; --label: #eaffff; --bar: #15a3a2; }
```

FILE: main.js
```js
const BAR = 325;
const START = 33;
const WIDTH = 840;

// Envelopes: [x, level, rib depth]
const beat = [[0,.95],[42,.95],[49,.6],[52,.05],[60,.03],[61,.75],[65,.35],[72,.03],[80,.02],[81,.12],[83,.02],[100,.03],[101,1],[104,1],[106,.55],[112,.3],[121,.05],[122,.25],[124,.03],[142,.03],[143,1],[160,.95],[168,.8],[172,.45],[179,.15],[182,.2],[183,.9],[186,.6],[189,.3],[195,.05],[202,.03],[204,.7],[205,.1],[222,.03],[224,.95],[227,.35],[234,.04],[243,.03],[245,.25],[246,.03],[263,.03],[264,1],[266,1],[268,.5],[275,.25],[282,.05],[285,.35],[287,.03],[304,.03],[305,1],[347,1],[352,.75],[358,.85],[400,1],[408,.72],[414,.85],[420,.68],[425,.8],[429,1],[435,.8],[455,.93],[468,1],[470,.5],[474,.12],[479,.03],[487,.03],[488,1],[490,.8],[507,.7],[509,.95],[517,.75],[522,.3],[528,.05],[529,1],[555,.95],[561,.8],[563,.2],[569,.12],[571,.03],[588,.03],[590,.9],[593,.3],[598,.04],[609,.03],[610,.6],[612,.05],[629,.05],[630,.9],[634,.45],[640,.03],[650,.05],[651,.9],[653,.05],[669,.03],[670,1],[690,.9],[695,.65],[701,.15],[704,.03],[711,.03],[712,.7],[717,.3],[722,.03],[731,.03],[732,.1],[734,.03],[751,.03],[752,1],[755,.7],[757,.4],[767,.1],[772,.25],[774,.03],[791,.03],[792,1],[817,.95],[820,.6],[827,.35],[831,.15],[835,.8],[839,.5],[840,.2]];
const bass = [[0,1,.36],[83,1,.36],[84,.7],[86,.15],[94,.03],[202,.03],[203,.5],[205,.85],[206,.89],[243,.89],[245,.3],[246,.03],[324,.03],[325,.5],[327,.88],[337,.88],[338,1,.36],[409,1,.36],[411,.2],[420,.03],[487,.03],[490,.4],[492,.9],[495,.82],[516,.82],[517,.88],[519,.82],[523,.82],[524,1],[526,.84],[555,.88],[612,.86],[614,.98],[616,.88],[622,1,.04],[648,1,.04],[650,.6],[652,1,.45],[733,1,.45],[735,.3],[737,.03],[840,.03]];
const phrase = [[0,.03],[1,.5],[3,1.05],[5,.9],[7,.6],[12,.34],[20,.05],[40,.04],[43,.2],[45,.08],[53,.12],[58,.25],[62,.5],[65,.72],[68,.5],[75,.55],[79,.5],[81,.85],[84,1.2],[86,.9],[90,.6],[94,.35],[100,.05],[104,.1],[120,.2],[127,.07],[140,.04],[144,.12],[147,.4],[152,.2],[157,.04],[162,.03]];
const synth = [[0,.02],[39,.02]];
for (let n = 0; n < 5; n++) phrase.forEach(([x, a]) => synth.push([40 + n * 162.5 + x, a]));
const px = list => list.map(([x, h]) => [x, h / 17.5, .3]);
const leadL = px([[0,2],[4,7],[24,10],[50,7],[80,11],[114,12.5],[147,9.5],[180,10.5],[197,16],[217,17],[230,12],[250,10],[280,11],[332,13],[347,10],[367,13],[390,9.5],[422,9.5],[455,10],[489,12],[522,10],[555,12],[575,16.5],[589,15],[605,10],[629,15],[652,13],[672,9.5],[705,10],[739,12],[782,13],[805,10],[840,9.5]]);
const leadR = px([[0,2],[4,7],[24,11],[40,9],[74,11],[104,13],[130,10],[164,10],[204,14],[257,9],[287,12],[317,14],[360,14],[390,10],[422,9],[465,14],[489,11],[529,16],[555,12],[595,13],[622,15.5],[662,11],[689,9],[742,14],[782,14],[815,10],[840,10]]);

function noise(seed) {
  let s = seed;
  return () => { s = (s * 16807) % 2147483647; return s / 2147483647; };
}

function outline(env, mid, { period, rough, sharp }, seed) {
  const rnd = noise(seed);
  const top = [], bottom = [];
  let i = 0;
  for (let x = 0; x <= WIDTH; x += period ? .5 : 1) {
    while (i < env.length - 2 && env[i + 1][0] <= x) i++;
    const [x0, a0, r0] = env[i], [x1, a1] = env[i + 1];
    const t = Math.min(1, Math.max(0, (x - x0) / (x1 - x0)));
    let a = a0 + (a1 - a0) * t;
    if (period && r0) {
      const dip = Math.pow(.5 - .5 * Math.cos(2 * Math.PI * x / period), sharp);
      a *= 1 - r0 * dip;
    }
    if (a > .06) a *= 1 - rough * rnd();
    const b = a > .06 ? a * (1 - rough * .6 * rnd()) : a;
    top.push(x + ',' + (mid - a * 17.5).toFixed(1));
    bottom.unshift(x + ',' + (mid + b * 17.5).toFixed(1));
  }
  return 'M' + top.join('L') + 'L' + bottom.join('L') + 'Z';
}

const tracks = [
  { name: 'BEAT', kind: 'beat', split: 72.4, left: beat, period: 0, rough: .1, level: 'live', arrows: true },
  { name: 'BASS', kind: 'bass', split: 72.4, left: bass, period: 6.5, sharp: 2.5, rough: 0, level: 'live hot', arrows: true, selected: true },
  { name: 'SYNTH', kind: 'synth', split: 71.7, left: synth, period: 0, rough: .35, level: 'live short' },
  { name: 'LEAD', kind: 'lead', split: 71.7, left: leadL, right: leadR, period: 4, sharp: 1, rough: .18, level: 'live short', speed: '½×' },
  { name: 'Audio 5', level: '' },
  { name: 'Audio 6', level: '' }
];

const heads = document.getElementById('heads');
const lanes = document.getElementById('lanes');
tracks.forEach((t, i) => {
  heads.insertAdjacentHTML('beforeend', `
    <div class="head ${t.selected ? 'sel-track' : ''}">
      <div class="num">${i + 1}</div>
      <div class="info">
        <div class="tname">${t.name}</div>
        <div class="ctl">
          <div class="btns"><button>M</button><button>S</button></div>
          <div class="btns"><button class="${t.selected ? 'armed' : ''}">R</button><button>I</button></div>
          <input type="range" class="level ${t.level}" value="73" aria-label="${t.name} volume">
          <svg viewBox="0 0 20 20"><use href="#knob"/></svg>
        </div>
        <svg class="ticon" viewBox="0 0 50 36"><use href="#wave"/></svg>
      </div>
    </div>`);
  let region = '';
  if (t.kind) {
    const speed = t.speed ? `<span>${t.speed}</span>` : '';
    const loop = '<svg viewBox="0 0 22 12"><use href="#loop"/></svg>';
    const arrows = t.arrows ? '<svg class="ud" viewBox="1 0 6 8"><use href="#updown" width="8" height="8"/></svg>' : '';
    region = `
      <div class="region ${t.kind}">
        <div class="labels"><span style="width:${t.split}%">${arrows}${t.name}${loop}${speed}</span><span>${t.name}${loop}${speed}</span></div>
        <svg class="wave" viewBox="0 11 ${WIDTH} 74" preserveAspectRatio="none" fill="currentColor">
          <path d="${outline(t.left, 28.5, t, 7 + i)}"/>
          <path d="${outline(t.right || t.left, 65.5, t, 91 + i)}"/>
        </svg>
      </div>`;
  }
  lanes.insertAdjacentHTML('beforeend', `<div class="lane">${region}</div>`);
});

const marks = document.getElementById('marks');
['3', '3 3', '4', '4 3', '5', '5 3'].forEach((text, i) => {
  const at = (i * BAR / 2 / WIDTH * 100).toFixed(2);
  marks.insertAdjacentHTML('beforeend', `<span class="${i % 2 ? '' : 'bar'}" style="left:${at}%">${text}</span>`);
});

let ticks = '', lines = '';
for (let n = -1; n < 42; n++) {
  const x = START + n * BAR / 16;
  ticks += `M${x} ${n % 4 ? 6 : 2}V11`;
  lines += `M${x} 0V524`;
}
document.getElementById('ticks').innerHTML = `<path d="${ticks}" stroke="#5e5e5e"/>`;
document.getElementById('grid').innerHTML = `<path d="${lines}" stroke="#353535"/>`;

document.querySelectorAll('.fader').forEach((f, i) => {
  const scale = [0, 3, 6, 9, 12, 15, 18, 21, 24, 30, 35, 40, 45, 50, 60];
  f.innerHTML = `<input type="range" aria-label="Fader" value="${i ? 80 : 83}">
    <div class="scale">${scale.map(m => `<span>${m}</span>`).join('')}</div>
    <div class="meter"><i></i><i></i></div>`;
});
```
